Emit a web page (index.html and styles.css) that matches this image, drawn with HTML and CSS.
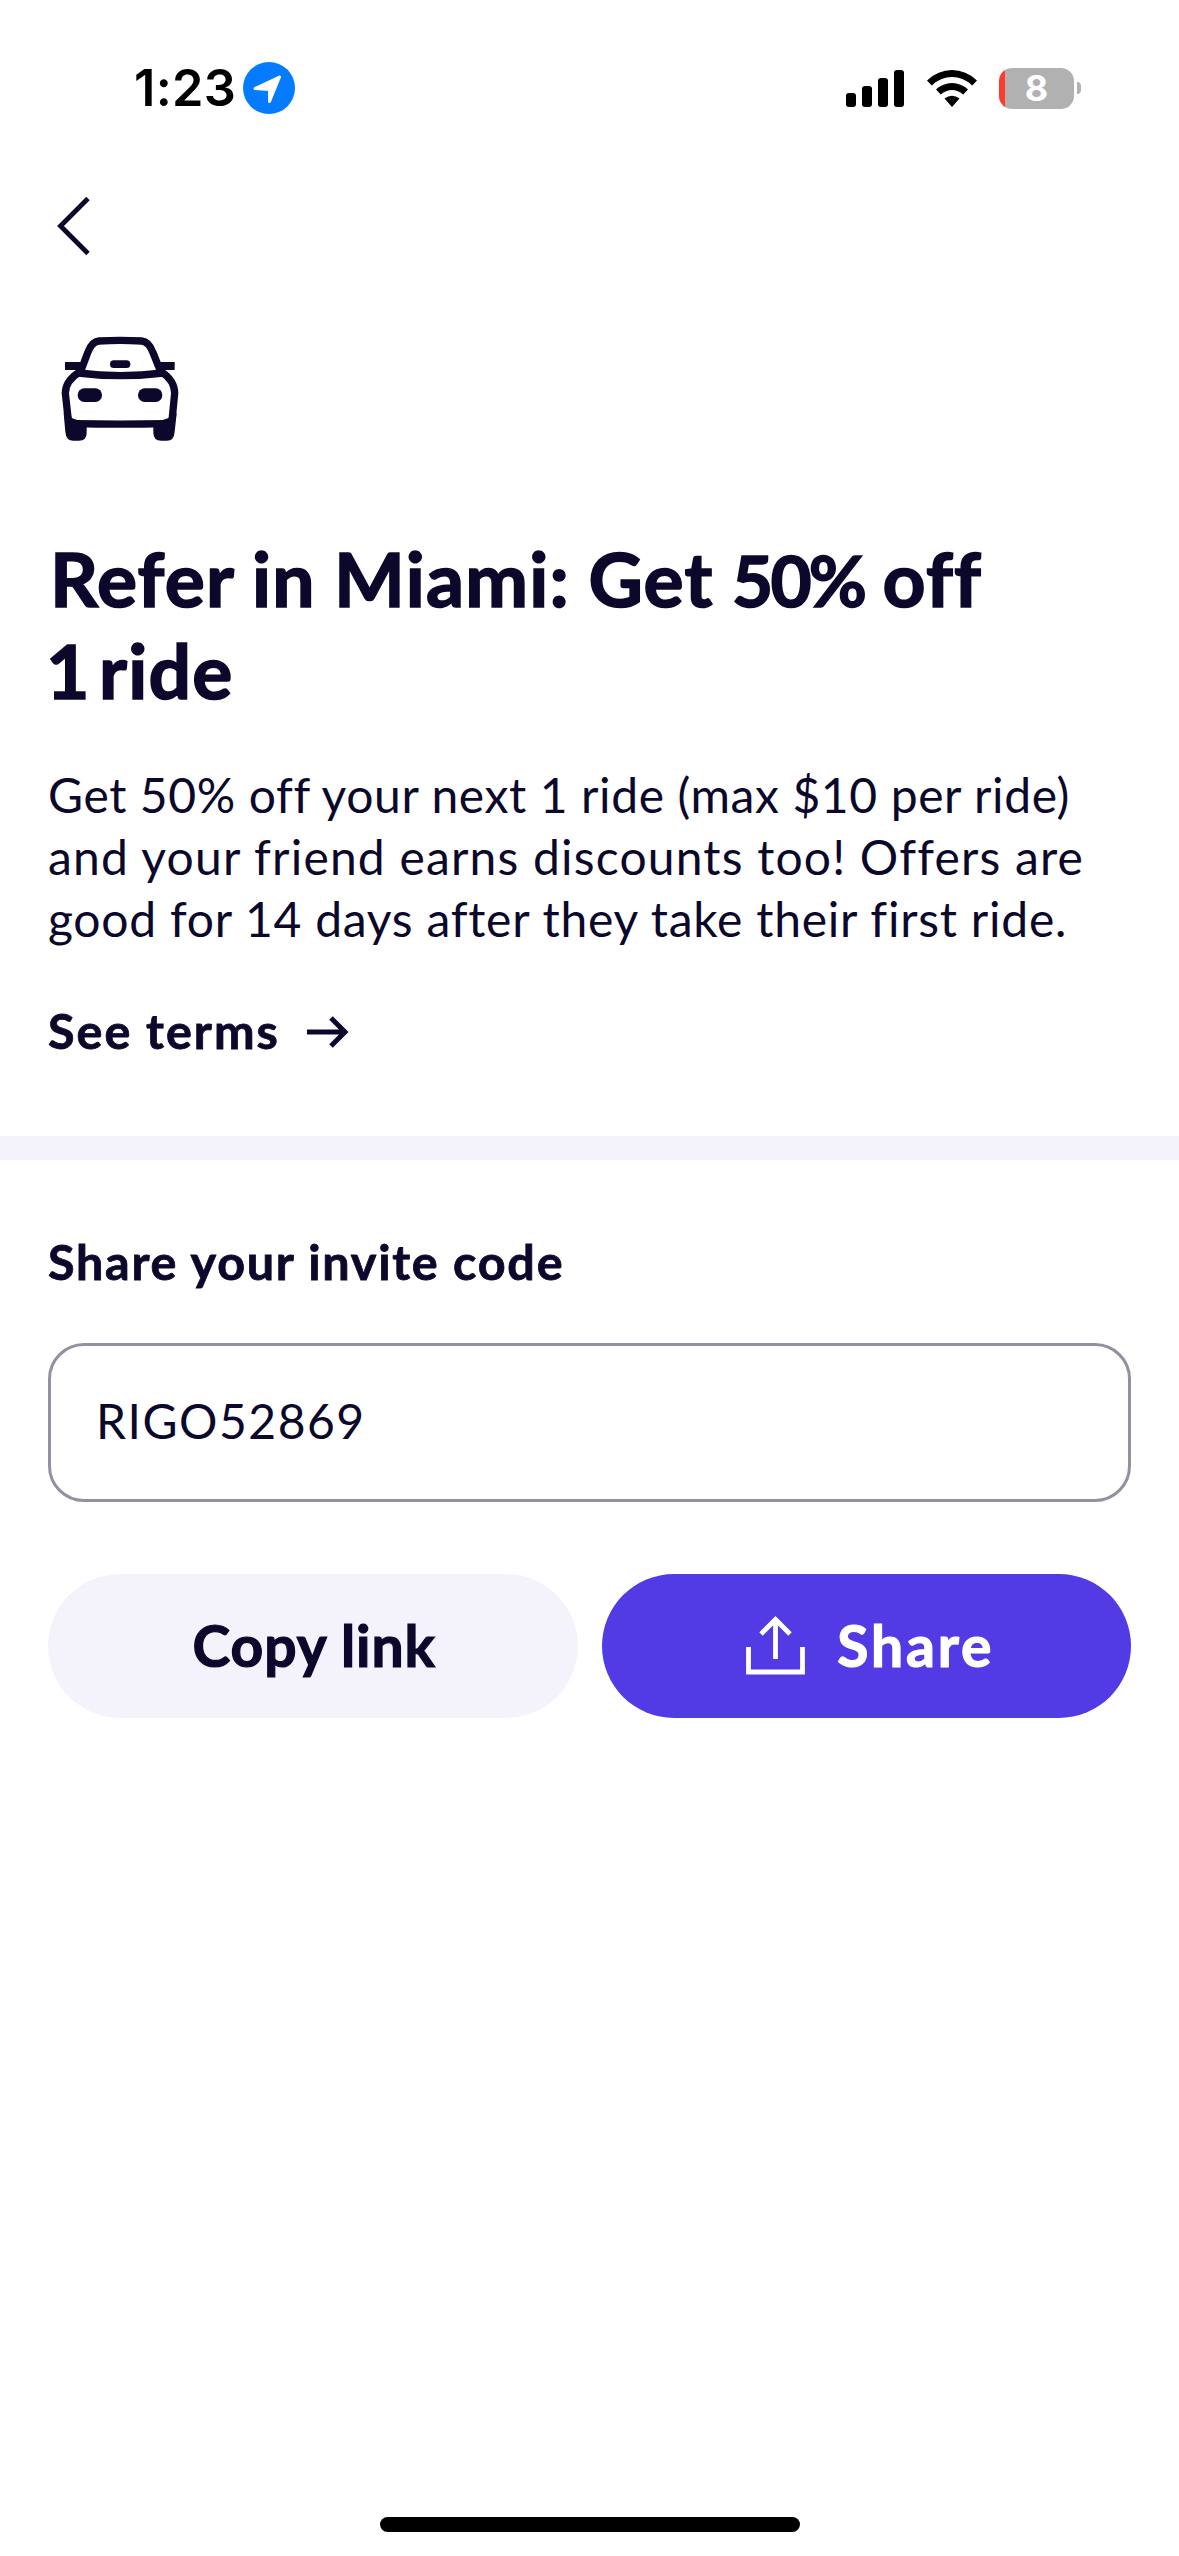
FILE: index.html
```html
<!DOCTYPE html>
<html lang="en">
<head>
<meta charset="utf-8">
<title>Refer a friend</title>
<link rel="stylesheet" href="styles.css">
</head>
<body>
<div class="screen">
  <header class="status">
    <div class="status-left">
      <span class="time">1:23</span>
      <svg class="location" viewBox="0 0 52 52"><circle cx="26" cy="26" r="26" fill="#057cff"/><path d="M12 26.500 36.500 15 26.500 39.500V27.500Z" fill="#fff" stroke="#fff" stroke-width="3" stroke-linejoin="round"/></svg>
    </div>
    <div class="status-right">
      <svg class="signal" viewBox="0 0 58 37"><rect y="23" width="10" height="14" rx="3"/><rect x="16" y="16" width="10" height="21" rx="3"/><rect x="32" y="8" width="10" height="29" rx="3"/><rect x="48" width="10" height="37" rx="3"/></svg>
      <svg class="wifi" viewBox="0 0 50 37"><path d="M0 10.500Q11 0 25 0T50 10.500L45.300 15.500Q36.500 7 25 7T4.700 15.500Z"/><path d="M9 19.500Q16 13 25 13T41 19.500L36.200 24.500Q31 20 25 20T13.800 24.500Z"/><path d="M17.500 28.500Q25 23 32.500 28.500L25 37Z"/></svg>
      <div class="battery"><span class="cell">8</span><span class="nub"></span></div>
    </div>
  </header>

  <nav class="nav">
    <svg class="back" viewBox="0 0 34 60"><path d="M32 2.500 4.500 30 32 57.500"/></svg>
  </nav>

  <main>
    <section class="offer">
      <svg class="car" viewBox="90 465 360 321">
        <g fill="none" stroke="#0c082c" stroke-width="22">
          <path d="M150 580 173 518Q185 485 207 483 270 479 335 483 357 485 369 518L394 580"/>
          <path d="M145 579Q270 595 400 579"/>
          <path d="M147 577Q106 603 106 640L114 712Q117 731 134 731 270 734 409 731 424 731 427 712L434 640Q434 603 396 577"/>
        </g>
        <g fill="#0c082c">
          <path d="M105 546H152L145 570H105ZM434 546H390L399 570H434Z"/>
          <rect x="240" y="541" width="61" height="23" rx="11.500"/>
          <rect x="143" y="625" width="73" height="41" rx="20"/>
          <rect x="324" y="625" width="73" height="41" rx="20"/>
          <path d="M101 700 106 755Q108 782 130 782H147Q170 782 170 758V730L118 712ZM440 700 434 755Q432 782 411 782H394Q370 782 370 758V730L422 712Z"/>
        </g>
      </svg>
      <h1 class="headline"><span class="lead">Refer in Miami: Get <span class="percent">50%</span> off</span><br><span class="rides">1 ride</span></h1>
      <p class="copy"><span class="line-a">Get 50% off your next 1 ride (max $10 per ride)</span><br><span class="line-b">and your friend earns discounts too! Offers are</span><br><span class="line-c">good for 14 days after they take their first ride.</span></p>
      <a class="terms"><span>See terms</span><svg class="arrow" viewBox="0 0 42 32"><path d="M0 16H38M24 2 38 16 24 30"/></svg></a>
    </section>

    <section class="invite">
      <h2 class="label">Share your invite code</h2>
      <div class="field"><span class="code">RIGO52869</span></div>
      <div class="actions">
        <button class="btn"><span class="btn-text">Copy link</span></button>
        <button class="btn primary"><svg class="share" viewBox="0 0 59 59"><path d="M2.500 31V56H56.500V31M29.500 43V4M15 18 29.500 3.500 44 18"/></svg><span class="btn-text">Share</span></button>
      </div>
    </section>
  </main>
  <div class="home"></div>
</div>
</body>
</html>
```

FILE: styles.css
```css
* { box-sizing: border-box; }

body {
  margin: 0;
  background: #fff;
  color: #0c082c;
  font-family: Lato, sans-serif;
}

svg { display: block; flex: none; }

.screen {
  width: 1179px;
  height: 2556px;
  display: flex;
  flex-direction: column;
}

.status {
  height: 176px;
  padding: 0 98px 0 134px;
  display: flex;
  justify-content: space-between;
  align-items: center;
  color: #000;
  font-family: Inter, sans-serif;
}

.status-left, .status-right { display: flex; align-items: center; }
.time { width: 109px; font-size: 50.500px; line-height: 60px; font-weight: 600; letter-spacing: 0.300px; white-space: nowrap; }
.location { width: 52px; height: 52px; }
.signal { width: 58px; height: 37px; margin-right: 23px; }
.wifi { width: 50px; height: 37px; margin-right: 22px; }
.battery { display: flex; align-items: center; gap: 3px; }

.cell {
  width: 75px;
  height: 41px;
  border-radius: 13px;
  background: linear-gradient(90deg, #ff3b30 6px, #b1b1b1 6px);
  color: #fff;
  font-size: 36px;
  line-height: 41px;
  font-weight: 700;
  text-align: center;
}

.nub { width: 4px; height: 12px; border-radius: 0 6px 6px 0; background: #b1b1b1; }

.nav { height: 159px; padding: 20px 56px; }
.back { width: 34px; height: 60px; }
.back path { fill: none; stroke: #0c082c; stroke-width: 4.800; }

.offer { padding: 0 48px 75px; border-bottom: 24px solid #f4f3fc; }
.car { width: 120px; height: 107px; margin-left: 12px; }

h1, h2, p { margin: 0; white-space: nowrap; }

.headline {
  margin-top: 90px;
  font-size: 75px;
  line-height: 92px;
  font-weight: 700;
  letter-spacing: 1.200px;
  -webkit-text-stroke: 1.600px #0c082c;
}

.lead { padding-left: 2px; word-spacing: -1px; }
.percent { font-size: 71px; line-height: 1; letter-spacing: -2.800px; }
.rides { margin-left: -2px; word-spacing: -11px; }

.copy { margin-top: 48px; font-size: 48px; line-height: 62px; }
.line-a { letter-spacing: 0.600px; }
.line-b { letter-spacing: 1.180px; }
.line-c { letter-spacing: 0.750px; }

.terms {
  margin-top: 49px;
  display: flex;
  align-items: center;
  gap: 27px;
  font-size: 48.500px;
  line-height: 62px;
  font-weight: 700;
  letter-spacing: 2px;
  -webkit-text-stroke: 0.800px #0c082c;
}

.arrow { width: 42px; height: 32px; margin-top: 4px; }
.arrow path { fill: none; stroke: #0c082c; stroke-width: 5; }

.invite { padding: 70px 48px 0; }
.label { font-size: 48.500px; line-height: 62px; font-weight: 700; letter-spacing: 1.750px; -webkit-text-stroke: 0.800px #0c082c; }

.field {
  height: 159px;
  margin-top: 51px;
  padding: 0 45px 5px;
  display: flex;
  align-items: center;
  border: 3px solid #9391a1;
  border-radius: 36px;
  font-size: 48px;
  letter-spacing: 1.500px;
}

.actions { margin-top: 72px; display: grid; grid-template-columns: 1fr 1fr; gap: 24px; }

.btn {
  height: 144px;
  padding: 0 0 2px 3px;
  display: flex;
  align-items: center;
  justify-content: center;
  gap: 32px;
  border: 0;
  border-radius: 72px;
  background: #f4f3fc;
  color: #0c082c;
  font: 700 57px Lato, sans-serif;
  letter-spacing: 0.900px;
  white-space: nowrap;
}

.btn-text { -webkit-text-stroke: 1.200px currentColor; }
.primary { padding-left: 8px; background: #523ae4; color: #fff; letter-spacing: 2.800px; }
.share { width: 59px; height: 59px; }
.share path { fill: none; stroke: #fff; stroke-width: 4.800; }

.home { width: 420px; height: 15px; margin: auto auto 24px; border-radius: 8px; background: #000; }
```
